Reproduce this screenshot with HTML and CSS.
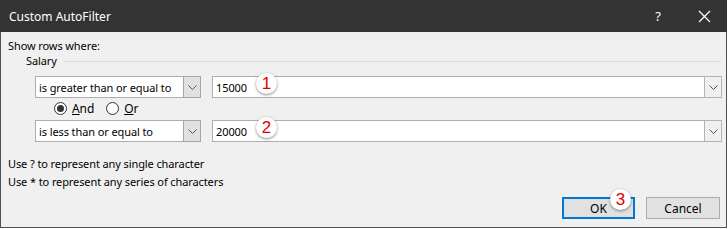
FILE: index.html
```html
<!DOCTYPE html>
<html>
<head>
<meta charset="utf-8">
<link rel="stylesheet" href="styles.css">
</head>
<body>
<div class="window">
  <div class="titlebar">
    <span class="title">Custom AutoFilter</span>
    <span class="help">?</span>
    <span class="close"><svg width="13" height="13" viewBox="0 0 13 13"><path d="M1 1L12 12M12 1L1 12" stroke="#fff" stroke-width="1.2" fill="none"/></svg></span>
  </div>
  <div class="content">
    <div class="label">Show rows where:</div>
    <div class="group"><span>Salary</span><span class="rule"></span></div>
    <div class="row">
      <div class="combo"><span class="ctext">is greater than or equal to</span><span class="cbtn"><svg width="9" height="5" viewBox="0 0 9 5"><path d="M0.5 0.5L4.5 4.5L8.5 0.5" stroke="#555" fill="none"/></svg></span></div>
      <div class="field"><span class="ftext">15000</span><span class="fbtn"><svg width="9" height="5" viewBox="0 0 9 5"><path d="M0.5 0.5L4.5 4.5L8.5 0.5" stroke="#555" fill="none"/></svg></span><span class="badge b1">1</span></div>
    </div>
    <div class="radios">
      <span class="radio on"><span class="dot"></span></span><span class="rlabel"><u>A</u>nd</span>
      <span class="radio"></span><span class="rlabel"><u>O</u>r</span>
    </div>
    <div class="row row2">
      <div class="combo"><span class="ctext">is less than or equal to</span><span class="cbtn"><svg width="9" height="5" viewBox="0 0 9 5"><path d="M0.5 0.5L4.5 4.5L8.5 0.5" stroke="#555" fill="none"/></svg></span></div>
      <div class="field"><span class="ftext">20000</span><span class="fbtn"><svg width="9" height="5" viewBox="0 0 9 5"><path d="M0.5 0.5L4.5 4.5L8.5 0.5" stroke="#555" fill="none"/></svg></span><span class="badge b2">2</span></div>
    </div>
    <div class="hints">
      <div>Use ? to represent any single character</div>
      <div>Use * to represent any series of characters</div>
    </div>
    <div class="buttons">
      <div class="btn ok">OK<span class="badge b3">3</span></div>
      <div class="btn">Cancel</div>
    </div>
  </div>
</div>
</body>
</html>
```
FILE: styles.css
```css
* { box-sizing: border-box; }
html, body { margin: 0; padding: 0; background: #fff; }
body { font-family: "Noto Sans", "Open Sans", sans-serif; font-size: 11px; letter-spacing: -0.1px; color: #000; }
.window {
  width: 727px; height: 228px;
  background: #f0f0f0;
  border: 1px solid #505050; border-top: none;
  display: flex; flex-direction: column;
}
.titlebar {
  flex-shrink: 0;
  height: 32px; background: #333333; color: #fff;
  display: flex; align-items: center; padding-left: 9px;
  margin: 0 -1px;
}
.title { flex: 1; font-size: 12px; letter-spacing: 0; }
.help { width: 46px; text-align: center; font-size: 13px; }
.close { width: 46px; display: flex; justify-content: center; }
.content { padding: 6px 0 0 7px; flex: 1; display: flex; flex-direction: column; min-height: 0; }
.label { height: 15px; line-height: 15px; flex-shrink: 0; }
.group { display: flex; align-items: center; padding-left: 18px; height: 15px; flex-shrink: 0; }
.group .rule { flex: 1; height: 1px; background: #dcdcdc; margin: 1px 5px 0 6px; }
.row { display: flex; margin-top: 8px; padding-left: 27px; gap: 11px; flex-shrink: 0; }
.row2 { margin-top: 3px; }
.combo, .field {
  height: 22px; background: #fff; border: 1px solid #adadad;
  display: flex; align-items: center; position: relative; white-space: nowrap;
}
.combo { width: 166px; }
.field { width: 510px; }
.ctext, .ftext { flex: 1; padding-left: 3px; }
.cbtn, .fbtn {
  width: 18px; height: 22px; margin: -1px -1px -1px 0;
  background: #e1e1e1; border: 1px solid #a6a6a6;
  display: flex; align-items: center; justify-content: center;
}
.fbtn { background: #f0f0f0; border-color: #b4b4b4; }
.radios { display: flex; align-items: center; height: 18px; margin-top: 1px; padding-left: 46px; flex-shrink: 0; }
.radio {
  width: 13px; height: 13px; border-radius: 50%; border: 1px solid #333;
  background: #fff; display: flex; align-items: center; justify-content: center;
}
.radio .dot { width: 7px; height: 7px; border-radius: 50%; background: #333; }
.rlabel { margin-left: 5px; margin-right: 12px; font-size: 12px; }
.hints { margin-top: 13px; line-height: 18px; flex-shrink: 0; }
.buttons { display: flex; justify-content: flex-end; gap: 11px; margin-top: auto; margin-bottom: 8px; padding-right: 6px; flex-shrink: 0; }
.btn {
  width: 74px; height: 22px; background: #e1e1e1; border: 1px solid #adadad;
  display: flex; align-items: center; justify-content: center; position: relative;
  font-size: 12px; letter-spacing: 0;
}
.btn.ok { border: 2px solid #0078d7; width: 73px; }
.badge {
  position: absolute; width: 21px; height: 21px; border-radius: 50%;
  background: #fff; color: #e60000; font-size: 17px; line-height: 21px; text-align: center;
  box-shadow: 0 1px 3px rgba(0,0,0,0.45); letter-spacing: 0;
  font-family: "Liberation Sans", sans-serif;
}
.b1 { left: 43px; top: -4px; }
.b2 { left: 43px; top: -4px; }
.b3 { left: 46px; top: -10px; }
```
